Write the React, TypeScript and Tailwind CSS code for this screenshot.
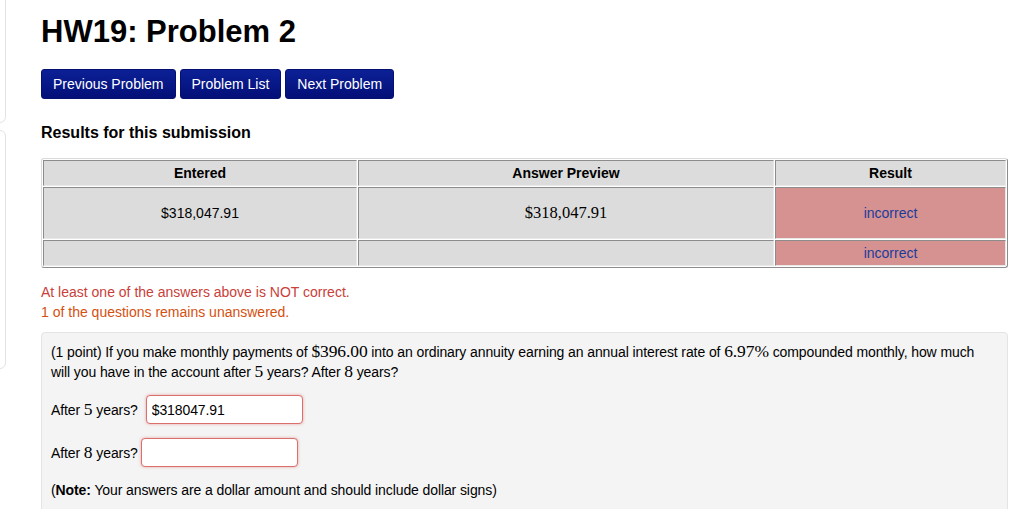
import React from "react";

const sans = { fontFamily: '"Liberation Sans", Arial, sans-serif' };

function M({ children }: { children: React.ReactNode }) {
  return <span className="font-['Liberation_Serif',serif] text-[17.5px] leading-[18px]">{children}</span>;
}

const cell =
  "border border-t-[#8c8c8c] border-l-[#8c8c8c] border-b-[#e8e8e8] border-r-[#e8e8e8] p-0";

export default function App() {
  return (
    <div className="relative min-h-[509px] bg-white text-black overflow-hidden" style={sans}>
      {/* sidebar edges */}
      <div className="absolute -left-[20px] -top-[10px] w-[26px] h-[133px] border border-[#e3e3e3] rounded-md" />
      <div className="absolute -left-[20px] top-[130px] w-[26px] h-[239px] border border-[#e3e3e3] rounded-md" />

      <div className="pl-[41px] pr-[16px] pt-[14px]">
        <h1 className="text-[31px] font-bold leading-[36px]">HW19: Problem 2</h1>

        <div className="flex gap-[4px] mt-[19px]">
          {["Previous Problem", "Problem List", "Next Problem"].map((t) => (
            <button
              key={t}
              className="h-[30px] px-[11px] rounded-[3px] text-white text-[14px] bg-gradient-to-b from-[#0c2096] to-[#040f78] border border-[#051070]"
            >
              {t}
            </button>
          ))}
        </div>

        <h2 className="text-[16px] font-bold mt-[24px] leading-[19px]">Results for this submission</h2>

        <table className="mt-[16px] w-[967px] border-separate border-spacing-[1px] border border-t-[#dadada] border-l-[#dadada] border-b-[#8c8c8c] border-r-[#8c8c8c] rounded-[3px] text-[14px] leading-[16px]">
          <tbody>
            <tr className="h-[26px]">
              <th className={`${cell} bg-[#dcdcdc] w-[314px] font-bold`}>Entered</th>
              <th className={`${cell} bg-[#dcdcdc] w-[416px] font-bold`}>Answer Preview</th>
              <th className={`${cell} bg-[#dcdcdc] font-bold`}>Result</th>
            </tr>
            <tr className="h-[52px]">
              <td className={`${cell} bg-[#dcdcdc] text-center`}>$318,047.91</td>
              <td className={`${cell} bg-[#dcdcdc] text-center`}>
                <span className="font-['Liberation_Serif',serif] text-[16.5px]">$318,047.91</span>
              </td>
              <td className={`${cell} bg-[#d69191] text-center text-[#1c3c9c]`}>incorrect</td>
            </tr>
            <tr className="h-[26px]">
              <td className={`${cell} bg-[#dcdcdc]`}></td>
              <td className={`${cell} bg-[#dcdcdc]`}></td>
              <td className={`${cell} bg-[#d69191] text-center text-[#1c3c9c]`}>incorrect</td>
            </tr>
          </tbody>
        </table>

        <div className="mt-[14px] text-[14px] leading-[20px]">
          <div className="text-[#c9403a]">At least one of the answers above is NOT correct.</div>
          <div className="text-[#d4500f]">1 of the questions remains unanswered.</div>
        </div>

        <div className="mt-[10px] w-[967px] bg-[#f4f4f4] border border-[#e4e4e4] rounded-[4px] pl-[9px] pr-[10px] pt-[9px] pb-[20px] text-[14px] leading-[20px] tracking-[-0.1px]">
          <p>
            (1 point) If you make monthly payments of <M>$396.00</M> into an ordinary annuity earning an annual
            interest rate of <M>6.97%</M> compounded monthly, how much will you have in the account after{" "}
            <M>5</M> years? After <M>8</M> years?
          </p>

          <div className="flex items-center mt-[13px]">
            <span>
              After <M>5</M> years?
            </span>
            <input
              readOnly
              value="$318047.91"
              className="ml-[8px] w-[157px] h-[29px] bg-white border border-[#d9706c] rounded-[4px] px-[5px] text-[14px] shadow-[0_0_3px_rgba(217,83,79,0.5)] outline-none"
            />
          </div>

          <div className="flex items-center mt-[14px]">
            <span>
              After <M>8</M> years?
            </span>
            <input
              readOnly
              value=""
              className="ml-[3px] w-[157px] h-[29px] bg-white border border-[#d9706c] rounded-[4px] px-[5px] text-[14px] shadow-[0_0_3px_rgba(217,83,79,0.5)] outline-none"
            />
          </div>

          <p className="mt-[13px]">
            (<b>Note:</b> Your answers are a dollar amount and should include dollar signs)
          </p>
        </div>
      </div>
    </div>
  );
}
